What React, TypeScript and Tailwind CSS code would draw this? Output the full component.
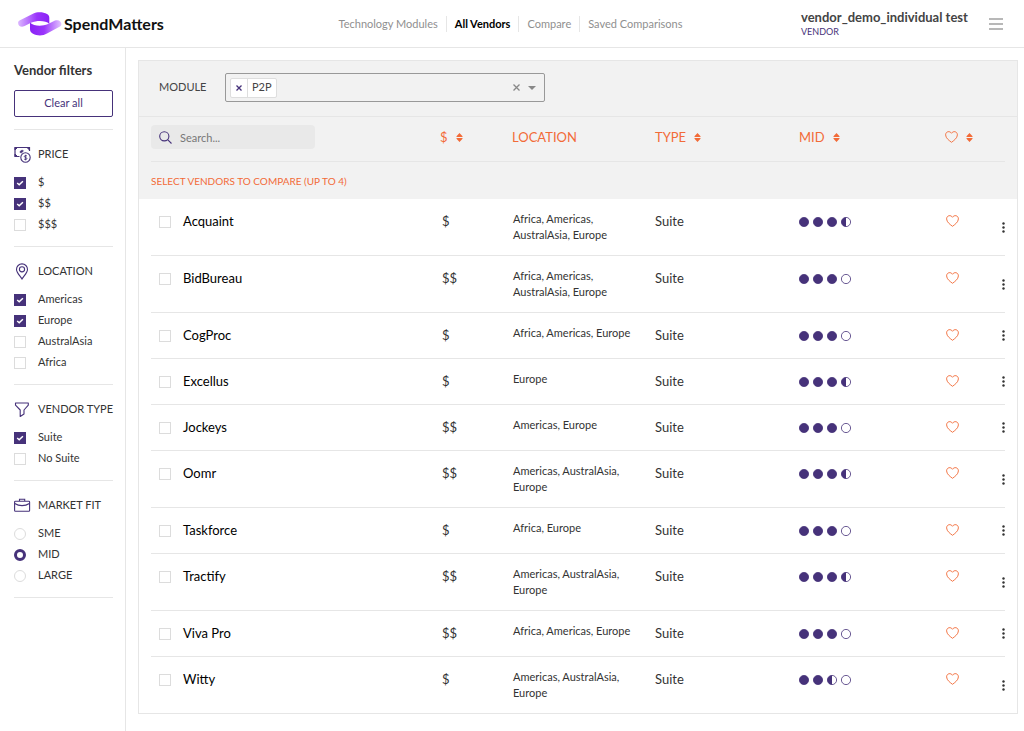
import { useState } from 'react';

interface Vendor {
  name: string;
  price: string;
  location: string;
  score: number;
}

const vendors: Vendor[] = [
  { name: 'Acquaint', price: '$', location: 'Africa, Americas, AustralAsia, Europe', score: 3.5 },
  { name: 'BidBureau', price: '$$', location: 'Africa, Americas, AustralAsia, Europe', score: 3 },
  { name: 'CogProc', price: '$', location: 'Africa, Americas, Europe', score: 3 },
  { name: 'Excellus', price: '$', location: 'Europe', score: 3.5 },
  { name: 'Jockeys', price: '$$', location: 'Americas, Europe', score: 3 },
  { name: 'Oomr', price: '$$', location: 'Americas, AustralAsia, Europe', score: 3.5 },
  { name: 'Taskforce', price: '$', location: 'Africa, Europe', score: 3 },
  { name: 'Tractify', price: '$$', location: 'Americas, AustralAsia, Europe', score: 3.5 },
  { name: 'Viva Pro', price: '$$', location: 'Africa, Americas, Europe', score: 3 },
  { name: 'Witty', price: '$', location: 'Americas, AustralAsia, Europe', score: 2.5 },
];

const navLinks = ['Technology Modules', 'All Vendors', 'Compare', 'Saved Comparisons'];

const Logo = () => (
  <svg width="44" height="24" viewBox="0 0 44 24" aria-hidden="true">
    <defs>
      <linearGradient id="logoTop" x1="0" y1="0" x2="1" y2="0">
        <stop offset="0" stopColor="#dcb8ff" />
        <stop offset="0.6" stopColor="#9a35fb" />
        <stop offset="1" stopColor="#8a22f5" />
      </linearGradient>
      <linearGradient id="logoBottom" x1="0" y1="0" x2="1" y2="0">
        <stop offset="0" stopColor="#8a22f5" />
        <stop offset="0.45" stopColor="#9a35fb" />
        <stop offset="1" stopColor="#e3c6ff" />
      </linearGradient>
    </defs>
    <path d="M1.500 8.500L15 1.800C19 -.2 25 -.2 29 2C30.800 3 31.300 4.300 31.300 6V12C28 8.500 19 8.300 13 10.800L6 14.300C1.500 16.500 -2 10.500 1.500 8.500Z" fill="url(#logoTop)" />
    <path d="M42 14.500L29 21.500C25 24 19 24 15 21.700C12.800 20.500 12 19 12 17V10.500C16 14.300 24 14.600 30 12L37 8.600C42 6.500 45.500 12 42 14.500Z" fill="url(#logoBottom)" />
  </svg>
);

const PriceIcon = () => (
  <svg width="17" height="17" viewBox="0 0 17 17" fill="none" stroke="#46327a" aria-hidden="true">
    <path d="M5.500 10.500H1V1.500H15.500V5" strokeWidth="1.200" />
    <path d="M1 1.500H3.500L1 4ZM15.500 1.500H13L15.500 4ZM1 10.500V8L3.500 10.500Z" fill="#46327a" />
    <path d="M6 6.500C6 4.500 8.500 3.500 9.500 5L7.500 6.800Z" fill="#46327a" strokeWidth=".6" />
    <circle cx="11.500" cy="11.500" r="4.700" strokeWidth="1.100" />
    <path d="M13 10.200C12.500 9.300 10.300 9.300 10.300 10.500C10.300 11.800 12.900 11.200 12.900 12.600C12.900 13.800 10.500 13.800 10 12.800M11.600 8.800V14.300" strokeWidth=".9" />
  </svg>
);

const PinIcon = () => (
  <svg width="17" height="17" viewBox="0 0 17 17" fill="none" stroke="#46327a" strokeWidth="1.100" aria-hidden="true">
    <path d="M8 16C6.500 13.300 2.500 9.700 2.500 6.400A5.500 5.500 0 0 1 13.500 6.400C13.500 9.700 9.500 13.300 8 16Z" />
    <circle cx="8" cy="6.300" r="2.600" />
  </svg>
);

const FunnelIcon = () => (
  <svg width="17" height="17" viewBox="0 0 17 17" fill="none" stroke="#46327a" strokeWidth="1.100" strokeLinejoin="round" aria-hidden="true">
    <path d="M1.500 2H14.300V4.200L10 9V13L6.200 15.500V9L1.500 4.200Z" />
  </svg>
);

const BriefcaseIcon = () => (
  <svg width="17" height="17" viewBox="0 0 17 17" fill="none" stroke="#46327a" strokeWidth="1.100" aria-hidden="true">
    <rect x=".6" y="4.200" width="15" height="10" rx=".8" />
    <path d="M5.500 4V2.200H10.700V4M.8 6.500C5 9.300 11 9.300 15.400 6.500" />
  </svg>
);

const HeartIcon = () => (
  <svg width="13" height="12" viewBox="0 0 13 12" fill="none" stroke="#f37748" strokeWidth="1" strokeLinejoin="round" aria-hidden="true">
    <path d="M6.500 11.300C4.500 9.800.6 7.200.6 3.900C.6 .3 4.900-.4 6.500 2.300C8.100-.4 12.400 .3 12.400 3.900C12.400 7.200 8.500 9.800 6.500 11.300Z" />
  </svg>
);

const SortButton = ({ label }: { label: string }) => (
  <button type="button" aria-label={label} className="flex">
    <svg width="7" height="9" viewBox="0 0 7 9" fill="#f26b38" aria-hidden="true">
      <path d="M3.500 0L6.500 3.200V4H.5V3.200ZM3.500 9L6.500 5.800V5H.5V5.800Z" />
    </svg>
  </button>
);

const Score = ({ value }: { value: number }) => (
  <div className="flex h-[21px] items-center gap-1" role="img" aria-label={`${value} out of 4`}>
    {[0, 1, 2, 3].map((i) => (
      <svg key={i} width="10" height="10" viewBox="0 0 10 10" aria-hidden="true">
        <circle cx="5" cy="5" r="4.600" fill={value >= i + 1 ? '#46327a' : 'none'} stroke="#46327a" strokeWidth=".8" />
        {value === i + 0.5 && <path d="M5 .4A4.600 4.600 0 0 0 5 9.600Z" fill="#46327a" />}
      </svg>
    ))}
  </div>
);

interface OptionProps {
  label: string;
  type: 'checkbox' | 'radio';
  name: string;
  defaultChecked?: boolean;
}

const Option = ({ label, type, name, defaultChecked }: OptionProps) => (
  <label className="flex h-[21px] items-center gap-3">
    <span className="relative flex">
      {type === 'radio' ? (
        <input
          type="radio"
          name={name}
          defaultChecked={defaultChecked}
          className="size-3 appearance-none rounded-full border border-[#dcdcdc] bg-white checked:border-[3px] checked:border-[#46327a]"
        />
      ) : (
        <>
          <input
            type="checkbox"
            name={name}
            defaultChecked={defaultChecked}
            className="peer size-3 appearance-none border border-[#dcdcdc] bg-white checked:border-[#46327a] checked:bg-[#46327a]"
          />
          <svg className="pointer-events-none absolute inset-0 hidden peer-checked:block" width="12" height="12" viewBox="0 0 12 12" fill="none" stroke="#fff" strokeWidth="1.500" aria-hidden="true">
            <path d="M3.200 6L5.200 7.800L8.900 4.200" />
          </svg>
        </>
      )}
    </span>
    {label}
  </label>
);

const filters = [
  { title: 'PRICE', Icon: PriceIcon, type: 'checkbox' as const, options: ['$', '$$', '$$$'], checked: ['$', '$$'] },
  { title: 'LOCATION', Icon: PinIcon, type: 'checkbox' as const, options: ['Americas', 'Europe', 'AustralAsia', 'Africa'], checked: ['Americas', 'Europe'] },
  { title: 'VENDOR TYPE', Icon: FunnelIcon, type: 'checkbox' as const, options: ['Suite', 'No Suite'], checked: ['Suite'] },
  { title: 'MARKET FIT', Icon: BriefcaseIcon, type: 'radio' as const, options: ['SME', 'MID', 'LARGE'], checked: ['MID'] },
];

const Header = () => (
  <header className="grid h-12 grid-cols-[1fr_auto_1fr] items-center border-b border-[#e6e6e6] pr-[21px] pl-[18px]">
    <a href="#" className="flex items-center gap-0.5 text-[16px] font-bold text-[#111]">
      <Logo />
      SpendMatters
    </a>
    <nav className="flex divide-x divide-[#e6e6e6] text-[11px] leading-4">
      {navLinks.map((link) => (
        <a
          key={link}
          href="#"
          className={link === 'All Vendors' ? 'px-2 font-bold text-black' : 'px-2 text-[#8f8f8f]'}
        >
          {link}
        </a>
      ))}
    </nav>
    <div className="flex items-center justify-end gap-4">
      <div className="min-w-[172px]">
        <p className="text-[13px] leading-4 font-bold text-[#444]">vendor_demo_individual test</p>
        <p className="text-[9px] leading-[14px] text-[#46327a]">VENDOR</p>
      </div>
      <button type="button" aria-label="Menu" className="flex flex-col gap-[3px]">
        <span className="h-0.5 w-3.5 bg-[#b8b8b8]"></span>
        <span className="h-0.5 w-3.5 bg-[#b8b8b8]"></span>
        <span className="h-0.5 w-3.5 bg-[#b8b8b8]"></span>
      </button>
    </div>
  </header>
);

const Sidebar = () => (
  <aside className="w-[126px] shrink-0 border-r border-[#e6e6e6] pr-3 pl-3.5 text-[11px] text-[#333]">
    <h2 className="mt-3.5 text-[13px] leading-4 font-bold">Vendor filters</h2>
    <button type="button" className="mt-3 mb-3 h-[27px] w-full rounded-xs border border-[#46327a] text-[#46327a]">
      Clear all
    </button>
    <div className="border-t border-[#e6e6e6]">
      {filters.map(({ title, Icon, type, options, checked }) => (
        <fieldset key={title} className="border-b border-[#e6e6e6] pb-[11px]">
          <legend className="mb-2 flex items-center gap-[7px] pt-3.5 leading-5 whitespace-nowrap">
            <Icon />
            {title}
          </legend>
          {options.map((option) => (
            <Option key={option} label={option} type={type} name={title} defaultChecked={checked.includes(option)} />
          ))}
        </fieldset>
      ))}
    </div>
  </aside>
);

const ModulePicker = () => {
  const [modules, setModules] = useState(['P2P']);

  return (
    <div className="flex h-14 items-center border-b border-[#e6e6e6] bg-[#f2f2f2] pb-0.5 pl-5 text-[11px] text-[#444]">
      <label htmlFor="module" className="w-[66px]">MODULE</label>
      <div className="flex h-[29px] w-80 items-center rounded-xs border border-[#999] pr-2 pl-1">
        {modules.map((module) => (
          <span key={module} className="flex h-5 items-center rounded-xs border border-[#dedede] bg-white">
            <button
              type="button"
              aria-label={`Remove ${module}`}
              className="h-full border-r border-[#dedede] px-[5px] text-[#46327a]"
              onClick={() => setModules(modules.filter((m) => m !== module))}
            >
              <svg width="6" height="6" viewBox="0 0 6 6" stroke="currentColor" strokeWidth="1.300" aria-hidden="true">
                <path d="M.5 .5L5.500 5.500M5.500 .5L.5 5.500" />
              </svg>
            </button>
            <span className="px-1">{module}</span>
          </span>
        ))}
        <input id="module" type="text" role="combobox" aria-expanded="false" className="min-w-0 flex-1 outline-none" />
        <button type="button" aria-label="Clear modules" className="mr-2 text-[#888]" onClick={() => setModules([])}>
          <svg width="7" height="7" viewBox="0 0 7 7" stroke="currentColor" strokeWidth="1.300" aria-hidden="true">
            <path d="M.5 .5L6.500 6.500M6.500 .5L.5 6.500" />
          </svg>
        </button>
        <button type="button" aria-label="Open modules" className="text-[#888]">
          <svg width="8" height="4" viewBox="0 0 8 4" fill="currentColor" aria-hidden="true">
            <path d="M0 0H8L4 4Z" />
          </svg>
        </button>
      </div>
    </div>
  );
};

const VendorTable = () => (
  <table className="w-full table-fixed border-separate border-spacing-0 text-left text-[13px] leading-[21px] text-[#333]">
    {/* The outer columns inset the row rules from the panel edge */}
    <colgroup>
      <col className="w-3" />
      <col />
      <col className="w-[72px]" />
      <col className="w-[143px]" />
      <col className="w-[144px]" />
      <col className="w-[146px]" />
      <col className="w-[46px]" />
      <col className="w-[14px]" />
      <col className="w-3" />
    </colgroup>
    <thead className="bg-[#f2f2f2] text-[#f26b38] [&_th]:font-normal">
      <tr className="h-[45px] [&>th:not(:first-child):not(:last-child)]:border-b [&>th]:border-[#e6e6e6]">
        <th></th>
        <th>
          <div className="-mt-1 flex h-6 w-[164px] items-center gap-2 rounded-sm bg-[#e9e9e9] pl-2">
            <svg width="13" height="13" viewBox="0 0 13 13" fill="none" stroke="#46327a" strokeWidth="1.100" aria-hidden="true">
              <circle cx="5.300" cy="5.300" r="4.600" />
              <path d="M8.600 8.600L12.500 12.500" />
            </svg>
            <input type="search" aria-label="Search vendors" placeholder="Search..." className="min-w-0 flex-1 text-[11px] text-[#444] outline-none placeholder:text-[#777]" />
          </div>
        </th>
        <th>
          <div className="-mt-1 flex items-center gap-2">$ <SortButton label="Sort by price" /></div>
        </th>
        <th>
          <div className="-mt-1">LOCATION</div>
        </th>
        <th>
          <div className="-mt-1 flex items-center gap-2">TYPE <SortButton label="Sort by type" /></div>
        </th>
        <th>
          <div className="-mt-1 flex items-center gap-2">MID <SortButton label="Sort by market fit" /></div>
        </th>
        <th colSpan={2}>
          <div className="-mt-1 flex items-center gap-2"><HeartIcon /> <SortButton label="Sort by favourite" /></div>
        </th>
        <th></th>
      </tr>
      <tr className="h-[37px]">
        <th></th>
        <th colSpan={7} className="pt-0.5 text-[10px]">SELECT VENDORS TO COMPARE (UP TO 4)</th>
        <th></th>
      </tr>
    </thead>
    <tbody className="[&>tr:not(:last-child)>td:not(:first-child):not(:last-child)]:border-b [&_td]:border-[#e6e6e6]">
      {vendors.map(({ name, price, location, score }) => (
        <tr key={name} className="align-top">
          <td></td>
          <td className="py-3 pl-2">
            <label className="flex items-center gap-3 text-black">
              <input type="checkbox" className="size-3 appearance-none border border-[#dcdcdc] bg-white checked:bg-[#46327a]" />
              {name}
            </label>
          </td>
          <td className="py-3 pl-0.5">{price}</td>
          <td className="py-3 pr-5 pl-px text-[11px] leading-4">{location}</td>
          <td className="py-3">Suite</td>
          <td className="py-3"><Score value={score} /></td>
          <td className="py-3 pl-px">
            <button type="button" aria-label={`Add ${name} to favourites`} className="flex h-5 items-center">
              <HeartIcon />
            </button>
          </td>
          <td className="align-middle">
            <button type="button" aria-label={`More options for ${name}`} className="ml-auto flex">
              <svg width="3" height="11" viewBox="0 0 3 11" fill="#333" aria-hidden="true">
                <circle cx="1.500" cy="1.500" r="1.200" />
                <circle cx="1.500" cy="5.500" r="1.200" />
                <circle cx="1.500" cy="9.500" r="1.200" />
              </svg>
            </button>
          </td>
          <td></td>
        </tr>
      ))}
    </tbody>
  </table>
);

export default function App() {
  return (
    <div className="flex min-h-screen flex-col bg-white font-['Lato',sans-serif]">
      <Header />
      <div className="flex flex-1">
        <Sidebar />
        <main className="min-w-0 flex-1 pt-3 pr-1.5 pb-4 pl-3">
          <div className="border border-[#e6e6e6]">
            <ModulePicker />
            <VendorTable />
          </div>
        </main>
      </div>
    </div>
  );
}
